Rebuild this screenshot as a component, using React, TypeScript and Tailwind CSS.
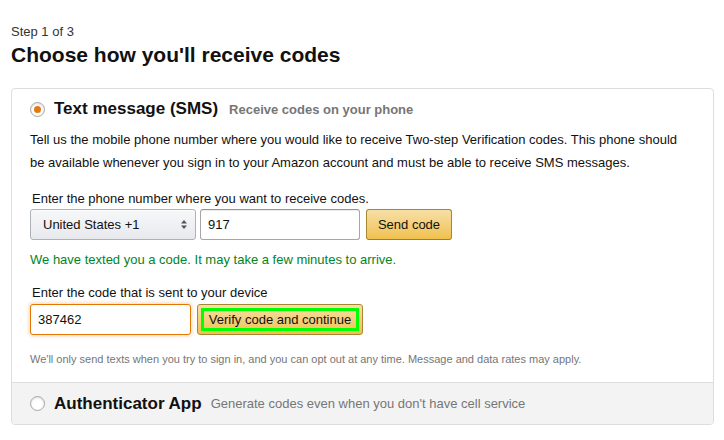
import React from 'react';

const Radio: React.FC<{ checked?: boolean }> = ({ checked }) => (
    <span className="flex h-[15px] w-[15px] shrink-0 items-center justify-center rounded-full border border-[#a6a6a6] bg-white shadow-[inset_0_1px_2px_rgba(0,0,0,0.15)]">
        {checked && <span className="h-[7px] w-[7px] rounded-full bg-[#e47911]"></span>}
    </span>
);

export default function App() {
    return (
        <div className="min-h-[440px] bg-white px-[11px] pt-[24px] text-[#111] font-['Liberation_Sans',Arial,sans-serif]">
            <div className="text-[13px] leading-[15px] text-[#333]">Step 1 of 3</div>
            <h1 className="mt-[3px] text-[21px] font-bold leading-[25px] text-[#111]">Choose how you'll receive codes</h1>

            <div className="mt-[21px] w-[703px] overflow-hidden rounded-[4px] border border-[#ddd]">
                <div className="px-[18px] pt-[9px] pb-[16px]">
                    <div className="flex items-center gap-[9px]">
                        <Radio checked />
                        <span className="text-[17px] font-bold leading-[22px]">Text message (SMS)</span>
                        <span className="ml-[2px] mt-[2px] text-[13px] font-bold text-[#767676]">Receive codes on your phone</span>
                    </div>

                    <p className="mt-[8px] text-[13px] leading-[23px] text-[#111]">
                        Tell us the mobile phone number where you would like to receive Two-step Verification codes. This phone should be available whenever you sign in to your Amazon account and must be able to receive SMS messages.
                    </p>

                    <div className="mt-[16px] pl-[2px] text-[13px] leading-[18px]">Enter the phone number where you want to receive codes.</div>
                    <div className="mt-[1px] flex gap-[4px]">
                        <div className="flex h-[31px] w-[166px] items-center justify-between rounded-[3px] border border-[#adb1b8] bg-gradient-to-b from-[#f7f8fa] to-[#e7e9ec] pl-[12px] pr-[8px] text-[13px] shadow-[0_1px_0_rgba(255,255,255,0.6)_inset]">
                            <span>United States +1</span>
                            <svg width="6" height="9" viewBox="0 0 6 9" fill="#555">
                                <path d="M3 0 L6 3.5 H0 Z" />
                                <path d="M0 5.5 H6 L3 9 Z" />
                            </svg>
                        </div>
                        <div className="flex h-[31px] w-[160px] items-center rounded-[3px] border border-[#a6a6a6] border-t-[#949494] bg-white px-[7px] text-[13px] shadow-[0_1px_0_rgba(255,255,255,0.5),inset_0_1px_0_rgba(0,0,0,0.07)]">
                            917
                        </div>
                        <button className="ml-[2px] h-[31px] w-[86px] rounded-[3px] border border-[#a88734] border-b-[#9c7e31] bg-gradient-to-b from-[#f7dfa5] to-[#f0c14b] text-[13px] text-[#111]">
                            Send code
                        </button>
                    </div>

                    <div className="mt-[11px] text-[13px] leading-[18px] text-[#00851f]">We have texted you a code. It may take a few minutes to arrive.</div>

                    <div className="mt-[15px] pl-[2px] text-[13px] leading-[18px]">Enter the code that is sent to your device</div>
                    <div className="mt-[2px] flex gap-[6px]">
                        <div className="flex h-[31px] w-[161px] items-center rounded-[3px] border border-[#e77600] bg-white px-[7px] text-[13px] shadow-[0_0_3px_2px_rgba(228,121,17,0.2)]">
                            387462
                        </div>
                        <button className="flex h-[31px] w-[166px] items-center justify-center rounded-[3px] border border-[#a88734] bg-gradient-to-b from-[#f7dfa5] to-[#f0c14b] p-[3px]">
                            <span className="flex h-full w-full items-center justify-center border-[3px] border-[#00ff00] text-[13px] text-[#111]">
                                Verify code and continue
                            </span>
                        </button>
                    </div>

                    <div className="mt-[17px] text-[11px] leading-[14px] text-[#767676]">
                        We'll only send texts when you try to sign in, and you can opt out at any time. Message and data rates may apply.
                    </div>
                </div>

                <div className="flex h-[42px] items-center gap-[9px] border-t border-[#ddd] bg-[#f3f3f3] px-[18px]">
                    <Radio />
                    <span className="text-[17px] font-bold leading-[22px]">Authenticator App</span>
                    <span className="text-[13px] text-[#767676]">Generate codes even when you don't have cell service</span>
                </div>
            </div>
        </div>
    );
}
